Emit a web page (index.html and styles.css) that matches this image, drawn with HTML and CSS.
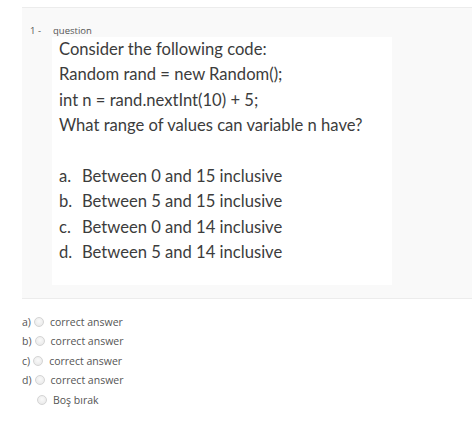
FILE: index.html
```html
<!DOCTYPE html>
<html>
<head>
<meta charset="utf-8">
<link rel="stylesheet" href="styles.css">
</head>
<body>
<div class="panel">
  <div class="qhead"><span class="qnum">1 -</span><span class="qtitle">question</span></div>
  <div class="qimage">
    <div class="line">Consider the following code:</div>
    <div class="line">Random rand = new Random();</div>
    <div class="line">int n = rand.nextInt(10) + 5;</div>
    <div class="line">What range of values can variable n have?</div>
    <div class="line blank">&nbsp;</div>
    <div class="opt"><span class="letter">a.</span><span>Between 0 and 15 inclusive</span></div>
    <div class="opt"><span class="letter">b.</span><span>Between 5 and 15 inclusive</span></div>
    <div class="opt"><span class="letter">c.</span><span>Between 0 and 14 inclusive</span></div>
    <div class="opt"><span class="letter">d.</span><span>Between 5 and 14 inclusive</span></div>
  </div>
</div>
<div class="answers">
  <label class="ans"><span class="alabel">a)</span><span class="radio"></span><span class="atext">correct answer</span></label>
  <label class="ans"><span class="alabel">b)</span><span class="radio"></span><span class="atext">correct answer</span></label>
  <label class="ans"><span class="alabel">c)</span><span class="radio"></span><span class="atext">correct answer</span></label>
  <label class="ans"><span class="alabel">d)</span><span class="radio"></span><span class="atext">correct answer</span></label>
  <label class="ans skip"><span class="radio"></span><span class="atext">Boş bırak</span></label>
</div>
</body>
</html>
```
FILE: styles.css
```css
html, body {
  margin: 0;
  padding: 0;
  background: #ffffff;
}
body {
  font-family: "Open Sans", "Noto Sans", sans-serif;
  color: #555;
}
.panel {
  margin: 7px 2px 0 22px;
  background: #f9f9f9;
  border-top: 1px solid #ececec;
  border-bottom: 1px solid #ececec;
  padding: 0 0 12px 30px;
  height: 278px;
  box-sizing: content-box;
}
.qhead {
  display: flex;
  align-items: center;
  height: 13px;
  padding-top: 16px;
  font-size: 9.5px;
  line-height: 13px;
  color: #555;
  margin-left: -22px;
}
.qnum {
  width: 23px;
}
.qtitle {
  color: #555;
}
.qimage {
  width: 333px;
  height: 248px;
  background: #ffffff;
  padding-left: 7px;
  font-family: Lato, "Open Sans", sans-serif;
  font-size: 16.6px;
  line-height: 25.4px;
  color: #3c3c3c;
}
.line {
  white-space: nowrap;
}
.opt {
  display: flex;
  white-space: nowrap;
}
.letter {
  width: 23px;
}
.answers {
  margin-top: 13px;
  padding-left: 22px;
  font-size: 10.5px;
  color: #555;
}
.ans {
  display: flex;
  align-items: center;
  height: 19.5px;
}
.alabel {
  display: inline-block;
}
.radio {
  display: inline-block;
  width: 10px;
  height: 10px;
  border-radius: 50%;
  border: 1px solid #d4d4d4;
  background: radial-gradient(circle at 50% 40%, #fafafa 0%, #ececec 70%, #e0e0e0 100%);
  margin: 0 6px 0 3px;
  box-sizing: border-box;
}
.skip {
  padding-left: 12px;
}
```
